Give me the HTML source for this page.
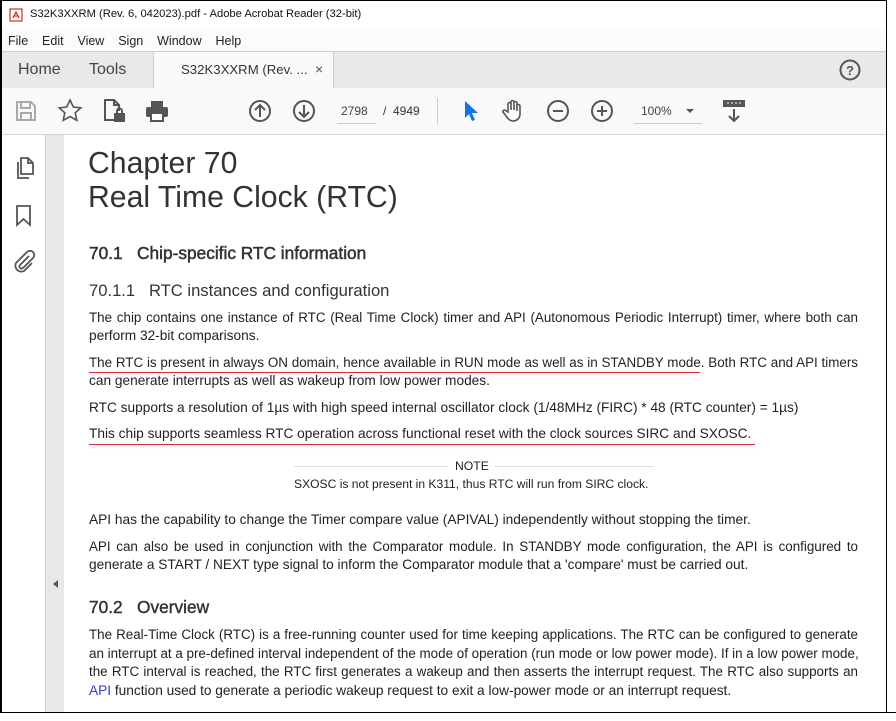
<!DOCTYPE html><html><head><style>
body{margin:0;width:896px;height:720px;overflow:hidden;background:#fff;font-family:"Liberation Sans",Arial,sans-serif;position:relative}
.a{position:absolute;white-space:nowrap}
.t{font-size:13.7px;color:#222;left:89px}
.j{position:absolute;left:89px;width:769px;font-size:13.4px;color:#222;white-space:nowrap;text-align:justify;text-align-last:justify}
.ul{position:absolute;height:0;border-top:1.5px solid #d0303a;box-shadow:0 2px 3px rgba(0,0,0,.15)}
.ic{position:absolute}
</style></head><body>
<div class="a" style="left:0;top:0;width:886px;height:30px;background:#fff;border-top:1px solid #000;border-left:2px solid #000"></div>
<svg class="ic" style="left:9px;top:8px" width="14" height="14"><rect x="1" y="1" width="12" height="12" fill="#fff" stroke="#c00"/><path d="M4 10 L7 4 L10 10 M5 8 H9" stroke="#c00" fill="none"/></svg>
<div class="a" style="left:30px;top:8px;font-size:11.2px;color:#111">S32K3XXRM (Rev. 6, 042023).pdf - Adobe Acrobat Reader (32-bit)</div>
<div class="a" style="left:2px;top:30px;width:884px;height:22px;background:#fbfbfb"></div>
<div class="a" style="left:8px;top:34px;font-size:12.5px;color:#222">File&nbsp;&nbsp;&nbsp; Edit&nbsp;&nbsp;&nbsp; View&nbsp;&nbsp;&nbsp; Sign&nbsp;&nbsp;&nbsp; Window&nbsp;&nbsp;&nbsp; Help</div>
<div class="a" style="left:2px;top:51px;width:884px;height:36px;background:#e9e9e9;border-top:1px solid #d0d0d0;border-bottom:1px solid #d0d0d0"></div>
<div class="a" style="left:153px;top:52px;width:179px;height:36px;background:#fafafa;border-left:1px solid #d0d0d0;border-right:1px solid #d0d0d0"></div>
<div class="a" style="left:18px;top:61px;font-size:16px;color:#444">Home</div>
<div class="a" style="left:89px;top:61px;font-size:16px;color:#444">Tools</div>
<div class="a" style="left:181px;top:62px;font-size:13.2px;color:#333">S32K3XXRM (Rev. ...</div>
<div class="a" style="left:315px;top:61px;font-size:14px;color:#555">×</div>
<svg class="ic" style="left:838px;top:58px" width="24" height="24"><circle cx="12" cy="12" r="9.5" fill="none" stroke="#555" stroke-width="2"/><text x="12" y="17" font-size="13" text-anchor="middle" fill="#555" font-family="Liberation Sans" font-weight="bold">?</text></svg>
<div class="a" style="left:2px;top:88px;width:884px;height:46px;background:#f9f9f9;border-bottom:1px solid #d6d6d6"></div>
<svg class="ic" style="left:14px;top:99px" width="24" height="24" fill="none" stroke="#aaa" stroke-width="2"><path d="M3 3h14l4 4v14H3z M7 3v6h9V3 M7 21v-7h10v7"/></svg>
<svg class="ic" style="left:57px;top:98px" width="26" height="26" fill="none" stroke="#555" stroke-width="1.6"><path d="M13 2l3.3 7 7.5.8-5.6 5 1.6 7.5L13 18.5 6.2 22.3l1.6-7.5-5.6-5 7.5-.8z"/></svg>
<svg class="ic" style="left:102px;top:98px" width="26" height="26" fill="none" stroke="#555" stroke-width="2"><path d="M12 22H3V2h9l5 5v6 M12 2v5h5"/><rect x="13" y="16" width="9" height="7" fill="#555"/><path d="M15 16v-3a2.5 2.5 0 0 1 5 0v3"/></svg>
<svg class="ic" style="left:145px;top:99px" width="24" height="24"><rect x="6" y="2" width="12" height="6" fill="#555"/><rect x="1" y="8" width="22" height="10" rx="2" fill="#555"/><rect x="6" y="14" width="12" height="8" fill="#fff" stroke="#555" stroke-width="2"/></svg>
<svg class="ic" style="left:248px;top:99px" width="24" height="24" fill="none" stroke="#555" stroke-width="2"><circle cx="12" cy="12" r="10"/><path d="M12 18V6 M7 11l5-5 5 5"/></svg>
<svg class="ic" style="left:292px;top:99px" width="24" height="24" fill="none" stroke="#555" stroke-width="2"><circle cx="12" cy="12" r="10"/><path d="M12 6v12 M7 13l5 5 5-5"/></svg>
<div class="a" style="left:341px;top:104px;font-size:12px;color:#444">2798</div>
<div class="a" style="left:337px;top:123px;width:39px;border-top:1px solid #ccc"></div>
<div class="a" style="left:383px;top:104px;font-size:12px;color:#333">/&nbsp; 4949</div>
<div class="a" style="left:437px;top:98px;height:27px;border-left:1px solid #ccc"></div>
<svg class="ic" style="left:463px;top:100px" width="16" height="22"><path d="M2 1v17l4-4 3 7 3-1-3-7h6z" fill="#1473e6"/></svg>
<svg class="ic" style="left:501px;top:98px" width="26" height="26" fill="none" stroke="#555" stroke-width="1.6"><path d="M7 14V6a1.5 1.5 0 0 1 3 0v6V4a1.5 1.5 0 0 1 3 0v8V5a1.5 1.5 0 0 1 3 0v8V8a1.5 1.5 0 0 1 3 0v8c0 4-3 7-7 7-3 0-5-2-7-5l-3-4a1.5 1.5 0 0 1 2.5-1.5z"/></svg>
<svg class="ic" style="left:546px;top:99px" width="24" height="24" fill="none" stroke="#555" stroke-width="2"><circle cx="12" cy="12" r="10"/><path d="M7 12h10"/></svg>
<svg class="ic" style="left:590px;top:99px" width="24" height="24" fill="none" stroke="#555" stroke-width="2"><circle cx="12" cy="12" r="10"/><path d="M7 12h10M12 7v10"/></svg>
<div class="a" style="left:641px;top:104px;font-size:12px;color:#444">100%</div>
<div class="a" style="left:686px;top:109px;border:4px solid transparent;border-top:4px solid #555"></div>
<div class="a" style="left:634px;top:123px;width:68px;border-top:1px solid #ccc"></div>
<svg class="ic" style="left:722px;top:99px" width="24" height="24"><rect x="1" y="1" width="22" height="7" fill="#555"/><path d="M5 4h2M9 4h2M13 4h2M17 4h2" stroke="#fff"/><path d="M12 10v12M7 17l5 5 5-5" stroke="#555" stroke-width="2" fill="none"/></svg>
<div class="a" style="left:2px;top:135px;width:43px;height:577px;background:#fff;border-right:1px solid #d0d0d0"></div>
<div class="a" style="left:46px;top:135px;width:18px;height:577px;background:#e8e8e8"></div>
<div class="a" style="left:53px;top:580px;border:4px solid transparent;border-right:5px solid #555;border-left:0"></div>
<svg class="ic" style="left:13px;top:156px" width="22" height="24" fill="none" stroke="#555" stroke-width="1.8"><path d="M8 2h7l5 5v11H8z M15 2v5h5 M5 6v16h11"/></svg>
<svg class="ic" style="left:15px;top:204px" width="18" height="24" fill="none" stroke="#555" stroke-width="1.8"><path d="M2 2h13v19l-6.5-6-6.5 6z"/></svg>
<svg class="ic" style="left:12px;top:248px" width="24" height="26" fill="none" stroke="#555" stroke-width="1.8"><path d="M17 8l-9 9a2 2 0 0 0 3 3l10-10a4 4 0 0 0-6-6L4 15a6 6 0 0 0 8 8l8-8"/></svg>
<div class="a" style="left:886px;top:0;width:10px;height:720px;background:#fff;border-left:1px solid #000"></div>
<div class="a" style="left:0;top:712px;width:896px;height:8px;background:#fff;border-top:1px solid #000"></div>
<div class="a" style="left:0;top:0;width:2px;height:712px;background:#000"></div>
<div class="a" style="left:88px;top:147px;font-size:30.2px;color:#333;line-height:34px">Chapter 70<br>Real Time Clock (RTC)</div>
<div class="a" style="left:89px;top:243px;font-size:17.3px;color:#333;-webkit-text-stroke:.5px #333">70.1&nbsp;&nbsp; Chip-specific RTC information</div>
<div class="a" style="left:89px;top:281px;font-size:16.6px;color:#333">70.1.1&nbsp;&nbsp; RTC instances and configuration</div>
<div class="j" style="top:310px">The chip contains one instance of RTC (Real Time Clock) timer and API (Autonomous Periodic Interrupt) timer, where both can</div>
<div class="a t" style="top:328px">perform 32-bit comparisons.</div>
<div class="j" style="top:355px">The RTC is present in always ON domain, hence available in RUN mode as well as in STANDBY mode. Both RTC and API timers</div>
<div class="ul" style="left:89px;top:372px;width:611px"></div>
<div class="a t" style="top:373px">can generate interrupts as well as wakeup from low power modes.</div>
<div class="a t" style="top:400px">RTC supports a resolution of 1µs with high speed internal oscillator clock (1/48MHz (FIRC) * 48 (RTC counter) = 1µs)</div>
<div class="a t" style="top:426px">This chip supports seamless RTC operation across functional reset with the clock sources SIRC and SXOSC.</div>
<div class="ul" style="left:89px;top:444px;width:666px"></div>
<div class="a" style="left:294px;top:466px;width:360px;border-top:1px solid #ddd"></div>
<div class="a" style="left:449px;top:459px;font-size:12.2px;color:#222;background:#fff;padding:0 6px">NOTE</div>
<div class="a" style="left:294px;top:477px;font-size:12.1px;color:#222">SXOSC is not present in K311, thus RTC will run from SIRC clock.</div>
<div class="a t" style="top:512px">API has the capability to change the Timer compare value (APIVAL) independently without stopping the timer.</div>
<div class="j" style="top:539px">API can also be used in conjunction with the Comparator module. In STANDBY mode configuration, the API is configured to</div>
<div class="a t" style="top:557px">generate a START / NEXT type signal to inform the Comparator module that a 'compare' must be carried out.</div>
<div class="a" style="left:89px;top:597px;font-size:17.3px;color:#333;-webkit-text-stroke:.4px #333">70.2&nbsp;&nbsp; Overview</div>
<div class="j" style="top:627px">The Real-Time Clock (RTC) is a free-running counter used for time keeping applications. The RTC can be configured to generate</div>
<div class="j" style="top:645.5px">an interrupt at a pre-defined interval independent of the mode of operation (run mode or low power mode). If in a low power mode,</div>
<div class="j" style="top:664px">the RTC interval is reached, the RTC first generates a wakeup and then asserts the interrupt request. The RTC also supports an</div>
<div class="a t" style="top:682.5px"><span style="color:#2a3ec8">API</span> function used to generate a periodic wakeup request to exit a low-power mode or an interrupt request.</div>
</body></html>
